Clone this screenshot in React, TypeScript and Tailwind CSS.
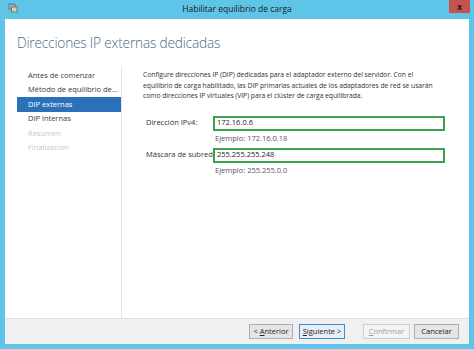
const navItems: { label: string; state: 'done' | 'active' | 'pending' | 'disabled' }[] = [
    { label: 'Antes de comenzar', state: 'done' },
    { label: 'Método de equilibrio de...', state: 'done' },
    { label: 'DIP externas', state: 'active' },
    { label: 'DIP internas', state: 'pending' },
    { label: 'Resumen', state: 'disabled' },
    { label: 'Finalización', state: 'disabled' },
];

function WinButton({ children, primary, disabled }: { children: React.ReactNode; primary?: boolean; disabled?: boolean }) {
    return (
        <button
            className={
                'flex h-[15px] w-full items-center justify-center border text-[7.5px] leading-none ' +
                (disabled
                    ? 'border-[#cfcfcf] bg-[#f4f4f4] text-[#a0a0a0]'
                    : primary
                      ? 'border-[#3c8fd6] bg-[#e8eef6] text-[#222]'
                      : 'border-[#adadad] bg-[#e5e5e5] text-[#222]')
            }
        >
            {children}
        </button>
    );
}

function Field({ label, value, example }: { label: string; value: string; example: string }) {
    return (
        <div className="flex flex-col">
            <div className="flex items-center">
                <span className="w-[67px] whitespace-nowrap text-[7.5px] text-[#333]">{label}</span>
                <div className="flex h-[15px] w-[232px] items-center border-2 border-[#3aa24f] bg-white pl-[2px] text-[7.5px] text-[#222]">
                    {value}
                </div>
            </div>
            <span className="mt-[1px] pl-[69px] text-[7.5px] leading-[12px] text-[#555]">{example}</span>
        </div>
    );
}

export default function App() {
    return (
        <div
            className="flex h-[349px] w-[474px] flex-col bg-[#5ec5e9] px-[5px] pb-[5px]"
            style={{ fontFamily: '"Open Sans", "Liberation Sans", sans-serif' }}
        >
            {/* title bar */}
            <div className="relative flex h-[19px] shrink-0 items-center justify-center">
                <svg className="absolute left-[3px] top-[3px]" width="10" height="10" viewBox="0 0 10 10">
                    <rect x="1" y="1" width="6" height="5" fill="#8fb4cf" stroke="#4b6f8a" strokeWidth="0.8" />
                    <rect x="3.5" y="4" width="5.5" height="5" fill="#d9d3a6" stroke="#6d6a4a" strokeWidth="0.8" />
                </svg>
                <span className="text-[8.5px] text-[#1b1b1b]">Habilitar equilibrio de carga</span>
                <div className="absolute right-[-1px] top-0 flex h-[13px] w-[21px] items-center justify-center bg-[#c75050] text-[8px] font-bold text-[#1a1a1a]">
                    x
                </div>
            </div>

            {/* content */}
            <div className="flex flex-1 flex-col bg-white">
                <div className="h-[48px] shrink-0 pl-[12px] pt-[14px]">
                    <h1 className="text-[13.7px] font-light leading-[20px] tracking-[-0.2px] text-[#4c6a82]">
                        Direcciones IP externas dedicadas
                    </h1>
                </div>

                <div className="flex flex-1">
                    <div className="flex w-[117px] shrink-0 flex-col border-r border-[#e3e3e3] pl-[12px] pt-[1px] pb-[10px]">
                        {navItems.map((item) => (
                            <div
                                key={item.label}
                                className={
                                    'flex h-[14.5px] items-center whitespace-nowrap pl-[11px] text-[7.5px] ' +
                                    (item.state === 'active'
                                        ? 'bg-[#2a71b9] text-white'
                                        : item.state === 'disabled'
                                          ? 'text-[#c8c8c8]'
                                          : 'text-[#3a3a3a]')
                                }
                            >
                                {item.label}
                            </div>
                        ))}
                    </div>

                    <div className="flex flex-1 flex-col pl-[21px] pt-[3px]">
                        <p className="whitespace-nowrap text-[6.8px] leading-[10.5px] tracking-[-0.05px] text-[#333]">
                            Configure direcciones IP (DIP) dedicadas para el adaptador externo del servidor. Con el
                            <br />
                            equilibrio de carga habilitado, las DIP primarias actuales de los adaptadores de red se usarán
                            <br />
                            como direcciones IP virtuales (VIP) para el clúster de carga equilibrada.
                        </p>
                        <div className="mt-[14px] flex flex-col gap-[4px] pl-[3px]">
                            <Field label="Dirección IPv4:" value="172.16.0.6" example="Ejemplo: 172.16.0.18" />
                            <Field label="Máscara de subred:" value="255.255.255.248" example="Ejemplo: 255.255.0.0" />
                        </div>
                    </div>
                </div>

                {/* footer */}
                <div className="flex h-[26px] shrink-0 items-center border-t border-[#dfdfdf] bg-[#f0f0f0] pr-[10px]">
                    <div className="ml-auto flex items-center">
                        <div className="w-[44px]">
                            <WinButton>
                                &lt;&nbsp;<u>A</u>nterior
                            </WinButton>
                        </div>
                        <div className="ml-[6px] w-[46px]">
                            <WinButton primary>
                                <u>S</u>iguiente&nbsp;&gt;
                            </WinButton>
                        </div>
                        <div className="ml-[18px] w-[47px]">
                            <WinButton disabled>
                                <u>C</u>onfirmar
                            </WinButton>
                        </div>
                        <div className="ml-[4px] w-[45px]">
                            <WinButton>Cancelar</WinButton>
                        </div>
                    </div>
                </div>
            </div>
        </div>
    );
}
